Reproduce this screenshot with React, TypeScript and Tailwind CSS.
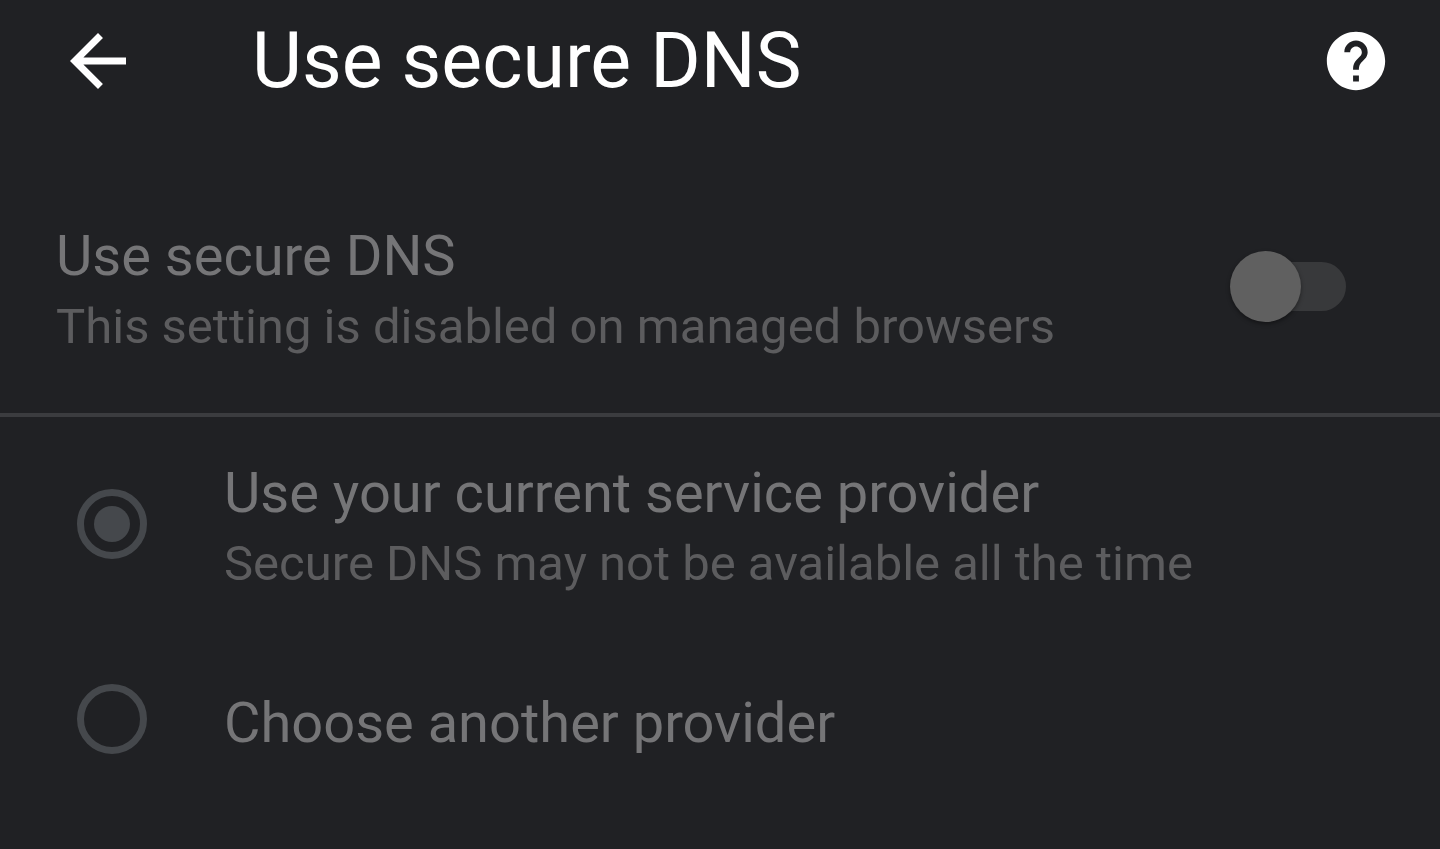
import { useState } from "react";

type ProviderProps = {
  value: string;
  title: string;
  description?: string;
  selected: string;
  onSelect: (value: string) => void;
};

function SettingText({ title, description }: { title: string; description?: string }) {
  return (
    <span className="flex flex-col gap-px pt-2">
      <span className="text-[56px] leading-[72px] text-[#757577]">{title}</span>
      {description && (
        <span className="text-[49px] leading-[68px] text-[#5c5c5e]">{description}</span>
      )}
    </span>
  );
}

function ProviderOption({ value, title, description, selected, onSelect }: ProviderProps) {
  return (
    <label className="flex items-center gap-[77px] pl-[77px] pr-14">
      <input
        type="radio"
        name="provider"
        value={value}
        checked={selected === value}
        onChange={() => onSelect(value)}
        disabled
        className="m-0 grid size-[70px] shrink-0 appearance-none place-content-center rounded-full border-7 border-[#45484c] before:size-[36px] before:rounded-full checked:before:bg-[#45484c]"
      />
      <SettingText title={title} description={description} />
    </label>
  );
}

export default function App() {
  const [provider, setProvider] = useState("current");

  return (
    <main className="min-h-screen bg-[#202124] font-['Roboto',sans-serif]">
      <header className="flex h-[122px] items-center pl-[56px] pr-[49px] text-white">
        <button type="button" aria-label="Back" className="size-[84px] shrink-0">
          <svg viewBox="0 0 24 24" className="size-full" fill="currentColor" aria-hidden="true">
            <path d="M20 11H7.83l5.59-5.59L12 4l-8 8 8 8 1.41-1.41L7.83 13H20v-2z" />
          </svg>
        </button>
        <h1 className="ml-28 flex-1 text-[77px] leading-[88px]">Use secure DNS</h1>
        <button type="button" aria-label="Help" className="size-[70px] shrink-0">
          <svg viewBox="0 0 24 24" className="size-full" fill="currentColor" aria-hidden="true">
            <path d="M12 2C6.48 2 2 6.48 2 12s4.480 10 10 10 10-4.480 10-10S17.520 2 12 2zm1 17h-2v-2h2v2zm2.070-7.750l-.9.920C13.450 12.900 13 13.500 13 15h-2v-.5c0-1.100.45-2.100 1.170-2.830l1.240-1.260c.37-.36.59-.86.59-1.410 0-1.100-.9-2-2-2s-2 .9-2 2H8c0-2.210 1.790-4 4-4s4 1.790 4 4c0 .88-.36 1.680-.93 2.250z" />
          </svg>
        </button>
      </header>

      <label className="flex items-center justify-between pb-[52px] pl-14 pr-[94px] pt-[90px]">
        <SettingText
          title="Use secure DNS"
          description="This setting is disabled on managed browsers"
        />
        <input
          type="checkbox"
          role="switch"
          disabled
          className="m-0 flex h-[49px] w-[112px] shrink-0 appearance-none items-center rounded-full bg-[#38393b] before:-ml-1 before:size-[71px] before:shrink-0 before:rounded-full before:bg-[#606060] before:shadow-[0_2px_4px_rgba(0,0,0,0.4)]"
        />
      </label>

      <fieldset
        aria-label="Provider"
        className="flex flex-col gap-[81px] border-t-4 border-[#3b3c3f] pt-8"
      >
        <ProviderOption
          value="current"
          title="Use your current service provider"
          description="Secure DNS may not be available all the time"
          selected={provider}
          onSelect={setProvider}
        />
        <ProviderOption
          value="other"
          title="Choose another provider"
          selected={provider}
          onSelect={setProvider}
        />
      </fieldset>
    </main>
  );
}
